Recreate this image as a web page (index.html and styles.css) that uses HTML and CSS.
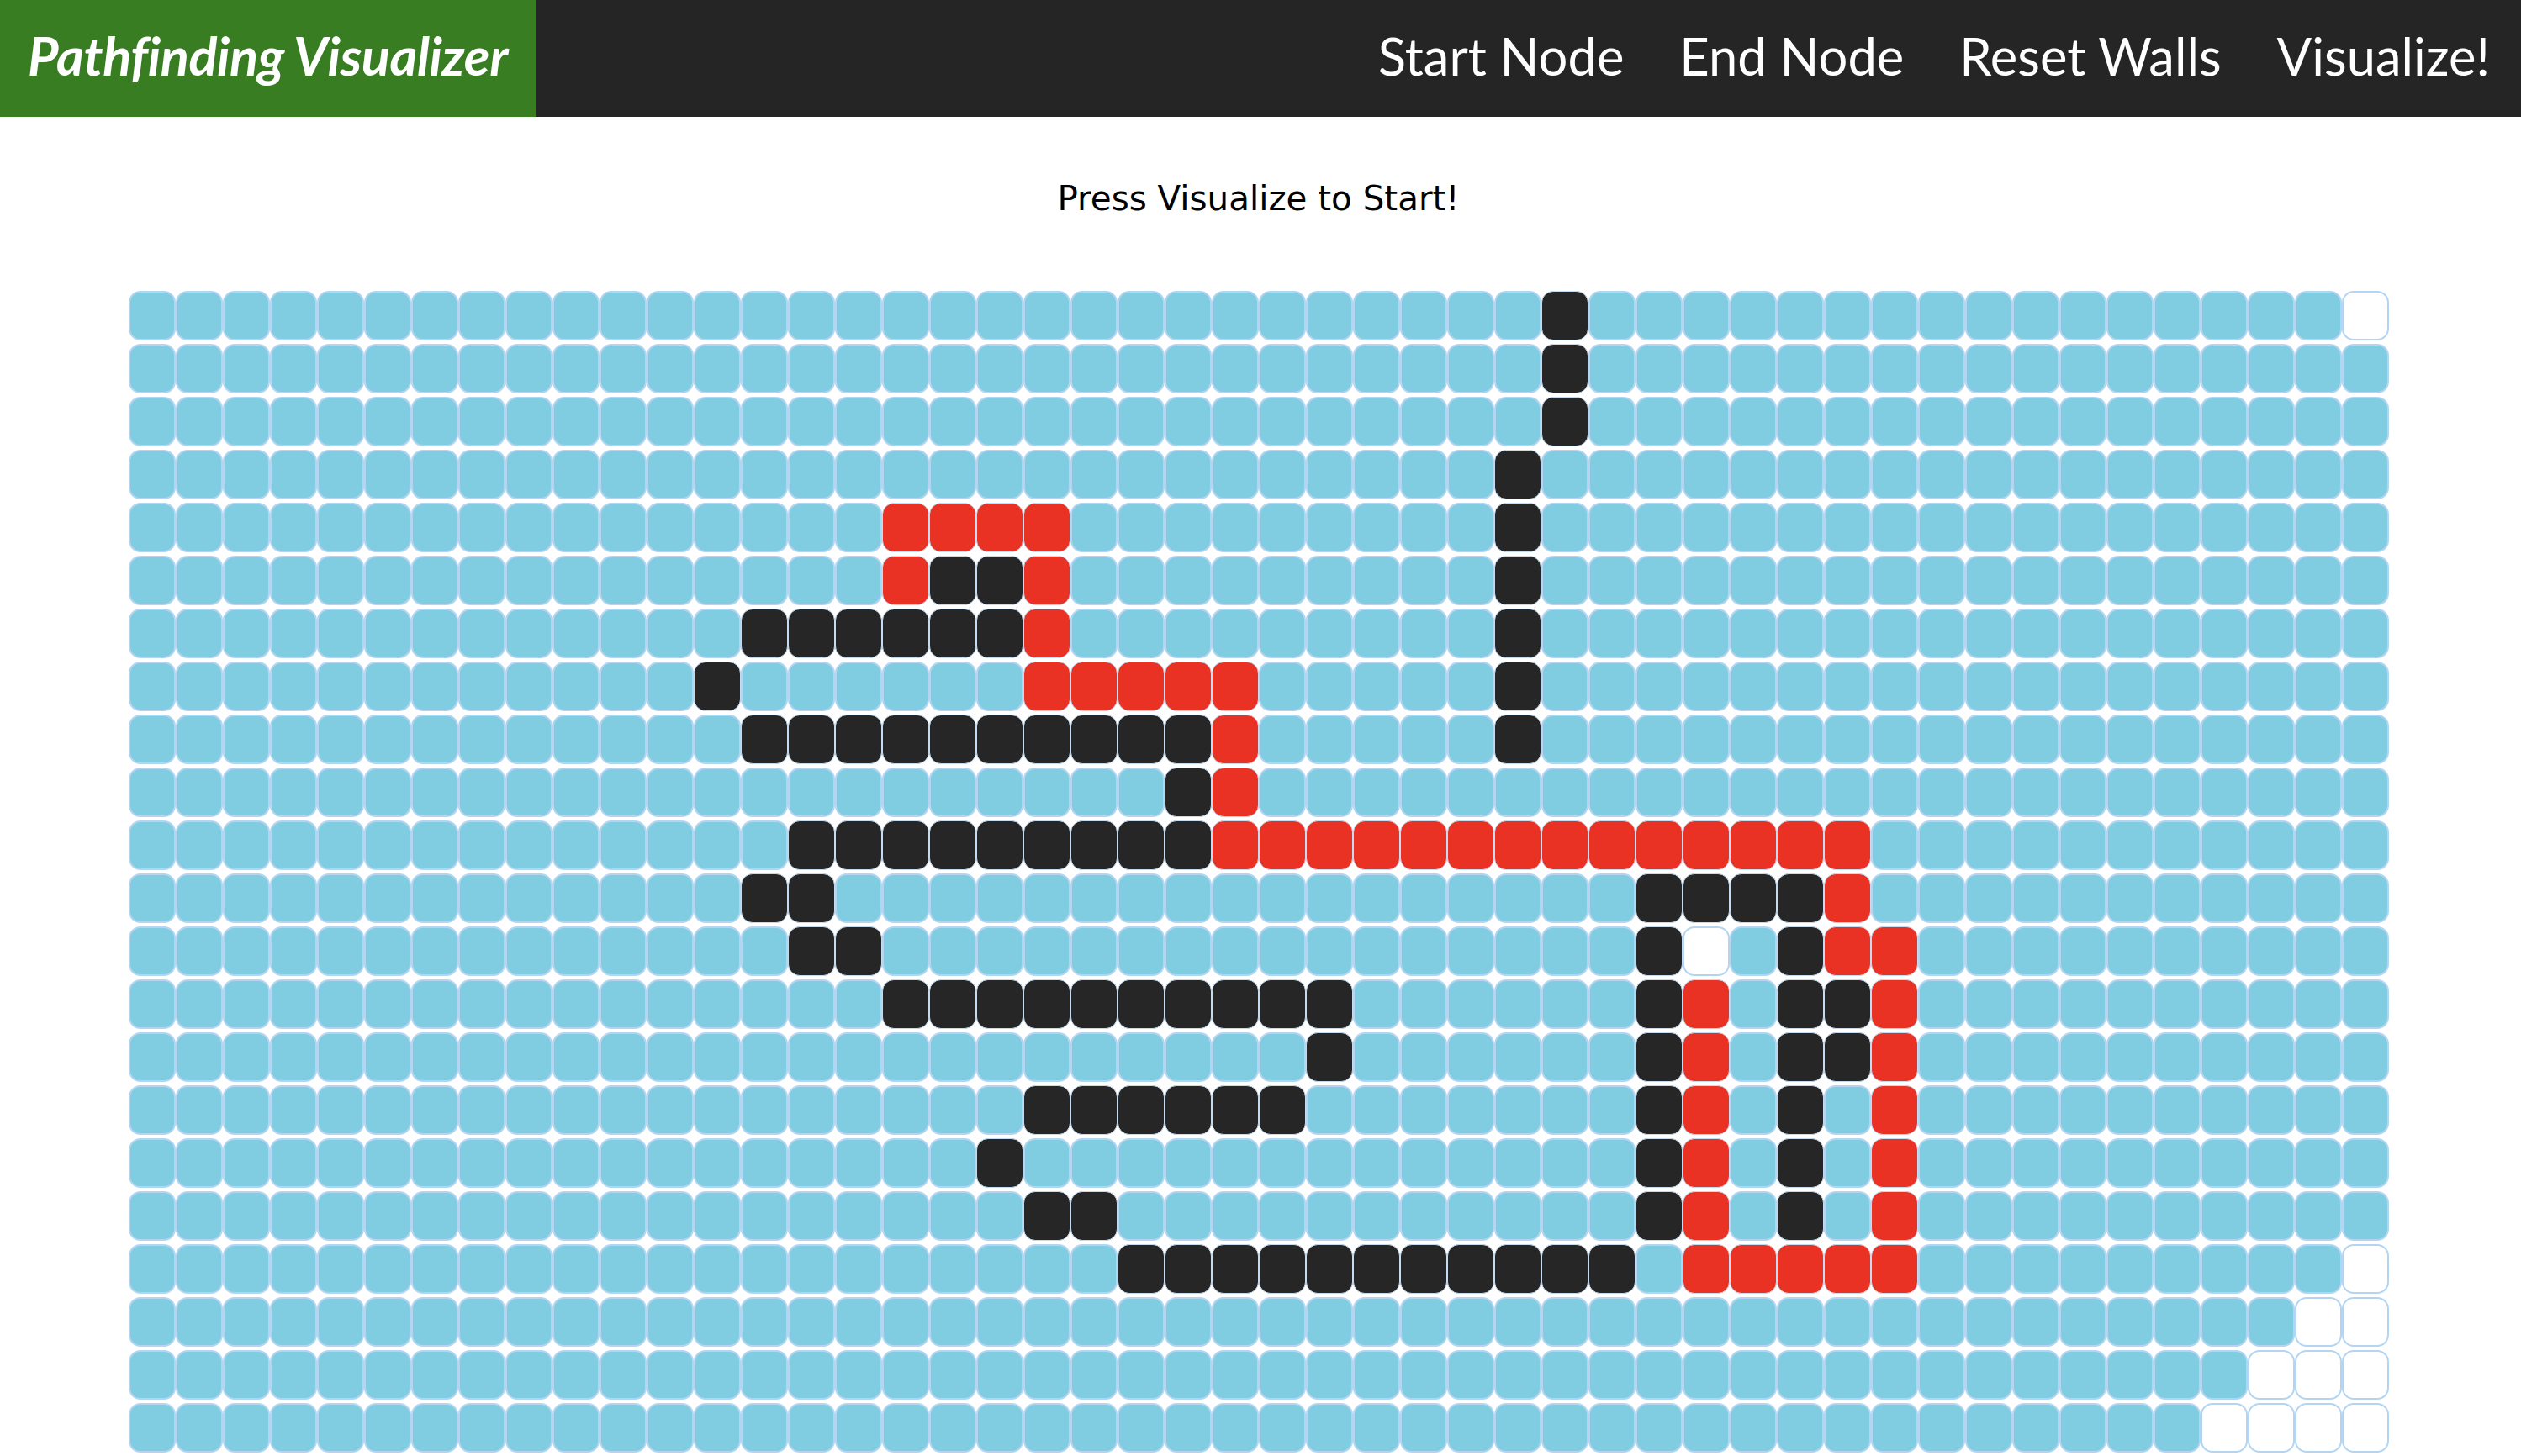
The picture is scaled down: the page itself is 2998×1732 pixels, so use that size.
FILE: index.html
```html
<!DOCTYPE html>
<html lang="en">
<head>
<meta charset="utf-8">
<title>Pathfinding Visualizer</title>
<link rel="stylesheet" href="styles.css">
</head>
<body>
<nav class="navbar">
  <a class="brand" href="#">Pathfinding Visualizer</a>
  <ul class="nav-links">
    <li><a href="#">Start Node</a></li>
    <li><a href="#">End Node</a></li>
    <li><a href="#">Reset Walls</a></li>
    <li><a href="#">Visualize!</a></li>
  </ul>
</nav>
<main class="content">
  <p class="message">Press Visualize to Start!</p>
  <div class="grid" id="grid"></div>
</main>
<script src="script.js"></script>
</body>
</html>
```

FILE: styles.css
```css
html, body {
  margin: 0;
  padding: 0;
  background: #ffffff;
}

.navbar {
  display: flex;
  align-items: center;
  justify-content: space-between;
  height: 139px;
  background: #252525;
}

.brand {
  display: flex;
  align-items: center;
  box-sizing: border-box;
  height: 100%;
  width: 637px;
  padding: 0 0 8px 33px;
  background: #387d22;
  color: #ffffff;
  text-decoration: none;
  font-family: Lato, "Noto Sans", sans-serif;
  font-weight: 700;
  font-style: italic;
  font-size: 63px;
  letter-spacing: -0.4px;
  white-space: nowrap;
}

.nav-links {
  display: flex;
  gap: 66px;
  margin: 0;
  padding: 0 37px 8px 0;
  list-style: none;
}

.nav-links a {
  color: #ffffff;
  text-decoration: none;
  font-family: Lato, "Noto Sans", sans-serif;
  font-size: 61.5px;
  white-space: nowrap;
}

.content {
  display: flex;
  flex-direction: column;
  align-items: center;
  padding-right: 5px;
}

.message {
  margin: 73px 0 86px;
  font-family: "DejaVu Sans", Verdana, sans-serif;
  font-size: 40.4px;
  line-height: 48px;
  color: #000000;
}

.grid {
  display: grid;
  grid-template-columns: repeat(48, 56px);
  grid-auto-rows: 59px;
  row-gap: 4px;
}

.cell {
  box-sizing: border-box;
  border: 2px solid #b4d5f2;
  border-radius: 14px;
  background: #80cce0;
}

.cell.unvisited {
  background: #ffffff;
}

.cell.wall {
  background: #262626;
  border: 1px solid #c4dcf2;
}

.cell.path {
  background: #ea3224;
  border: 1px solid #c4dcf2;
}
```

FILE: script.js
```js
(function () {
  var COLS = 48;
  var ROWS = 24;
  // ranges: [from, to, type]  '#' wall, 'r' path, 'w' unvisited
  var spec = [
    [[30, 30, '#'], [47, 47, 'w']],
    [[30, 30, '#']],
    [[30, 30, '#']],
    [[29, 29, '#']],
    [[16, 19, 'r'], [29, 29, '#']],
    [[16, 16, 'r'], [17, 18, '#'], [19, 19, 'r'], [29, 29, '#']],
    [[13, 18, '#'], [19, 19, 'r'], [29, 29, '#']],
    [[12, 12, '#'], [19, 23, 'r'], [29, 29, '#']],
    [[13, 22, '#'], [23, 23, 'r'], [29, 29, '#']],
    [[22, 22, '#'], [23, 23, 'r']],
    [[14, 22, '#'], [23, 36, 'r']],
    [[13, 14, '#'], [32, 35, '#'], [36, 36, 'r']],
    [[14, 15, '#'], [32, 32, '#'], [33, 33, 'w'], [35, 35, '#'], [36, 37, 'r']],
    [[16, 25, '#'], [32, 32, '#'], [33, 33, 'r'], [35, 36, '#'], [37, 37, 'r']],
    [[25, 25, '#'], [32, 32, '#'], [33, 33, 'r'], [35, 36, '#'], [37, 37, 'r']],
    [[19, 24, '#'], [32, 32, '#'], [33, 33, 'r'], [35, 35, '#'], [37, 37, 'r']],
    [[18, 18, '#'], [32, 32, '#'], [33, 33, 'r'], [35, 35, '#'], [37, 37, 'r']],
    [[19, 20, '#'], [32, 32, '#'], [33, 33, 'r'], [35, 35, '#'], [37, 37, 'r']],
    [[21, 31, '#'], [33, 37, 'r'], [47, 47, 'w']],
    [[46, 47, 'w']],
    [[45, 47, 'w']],
    [[44, 47, 'w']],
    [[43, 47, 'w']],
    [[42, 47, 'w']]
  ];
  var cls = { '#': 'wall', 'r': 'path', 'w': 'unvisited' };
  var grid = document.getElementById('grid');
  var frag = document.createDocumentFragment();
  for (var r = 0; r < ROWS; r++) {
    var row = new Array(COLS).fill('');
    (spec[r] || []).forEach(function (s) {
      for (var c = s[0]; c <= s[1]; c++) row[c] = cls[s[2]];
    });
    for (var c = 0; c < COLS; c++) {
      var d = document.createElement('div');
      d.className = 'cell' + (row[c] ? ' ' + row[c] : '');
      frag.appendChild(d);
    }
  }
  grid.appendChild(frag);
})();
```
